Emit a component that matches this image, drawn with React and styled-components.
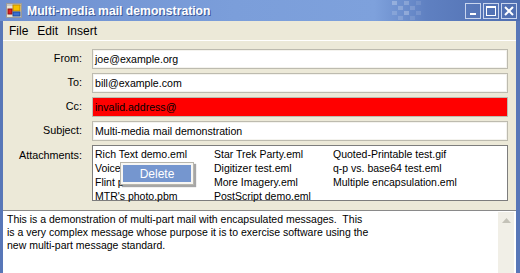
import React from 'react';
import styled, { createGlobalStyle } from 'styled-components';

const GlobalStyle = createGlobalStyle`
  html, body {
    margin: 0;
    padding: 0;
    overflow: hidden;
    background: #ffffff;
  }
`;

const Window = styled.div`
  width: 520px;
  height: 273px;
  display: flex;
  flex-direction: column;
  font-family: "Liberation Sans", Arial, sans-serif;
  overflow: hidden;
`;

const TitleBar = styled.div`
  height: 21px;
  flex: none;
  display: flex;
  align-items: center;
  padding: 0 6px 0 6px;
  position: relative;
  background: linear-gradient(to right, #6f90d0 0%, #7b9eda 45%, #7ea1dc 72%, #5f80c1 82%, #4f6eb0 100%);
`;

const Title = styled.div`
  margin-left: 5px;
  flex: 1;
  color: #ffffff;
  font-weight: bold;
  font-size: 12.2px;
  text-shadow: 1px 1px 0 #3d5a99;
`;

const Checker = styled.svg`
  position: absolute;
  left: 392px;
  top: 1px;
`;

const CaptionButtons = styled.div`
  display: flex;
  gap: 2px;
  margin-right: -3px;
`;

const CaptionButton = styled.div`
  width: 14px;
  height: 14px;
  border: 1px solid #c9d5ee;
  display: flex;
  align-items: center;
  justify-content: center;
`;

const Frame = styled.div`
  flex: 1;
  display: flex;
  flex-direction: column;
  background: #ece9d8;
  border-left: 3px solid #5877b8;
  border-right: 4px solid #5877b8;
  min-height: 0;
`;

const MenuBar = styled.div`
  height: 19px;
  flex: none;
  display: flex;
  align-items: center;
  padding-left: 3px;
  border-bottom: 1px solid #ffffff;
  font-size: 12px;
  color: #000;
`;

const MenuItem = styled.span`
  padding: 0 3px;
  margin-right: ${p => p.$gap || 0}px;
`;

const Form = styled.div`
  display: grid;
  grid-template-columns: 79px 416px;
  column-gap: 10px;
  row-gap: 4px;
  padding: 8px 0 9px 0;
  flex: none;
`;

const Label = styled.div`
  text-align: right;
  font-size: 10.8px;
  color: #000;
  align-self: ${p => (p.$top ? 'start' : 'center')};
  margin-top: ${p => (p.$top ? 4 : -2)}px;
`;

const Field = styled.div`
  height: 20px;
  box-sizing: border-box;
  border: 1px solid #bdbbaf;
  box-shadow: inset 0 0 0 1px ${p => (p.$error ? '#ff0000' : '#f4f3ee')};
  background: ${p => (p.$error ? '#ff0000' : '#ffffff')};
  padding-left: 2px;
  display: flex;
  align-items: center;
  font-size: 10.6px;
  color: #000;
`;

const ListBox = styled.div`
  position: relative;
  height: 56px;
  box-sizing: border-box;
  border: 1px solid #7d7d7d;
  background: #ffffff;
  padding: 1px 0 0 2px;
  display: grid;
  grid-template-columns: 119px 119px 119px;
  grid-template-rows: repeat(4, 14px);
  grid-auto-flow: column;
  font-size: 10.5px;
  line-height: 14px;
`;

const ListItem = styled.div`
  white-space: nowrap;
`;

const ContextMenu = styled.div`
  position: absolute;
  left: 27px;
  top: 16px;
  width: 74px;
  height: 23px;
  box-sizing: border-box;
  padding: 2px;
  background: #f7f6f3;
  border: 1px solid #b8b6ad;
  box-shadow: 2px 2px 1px rgba(0, 0, 0, 0.35);
`;

const MenuEntry = styled.div`
  height: 100%;
  background: #7596cf;
  color: #ffffff;
  font-size: 12px;
  display: flex;
  align-items: center;
  justify-content: center;
`;

const MessageArea = styled.div`
  flex: 1;
  display: flex;
  background: #ffffff;
  border-top: 1px solid #8a8a8a;
  min-height: 0;
`;

const MessageText = styled.div`
  flex: 1;
  padding: 2px 0 0 4px;
  font-size: 10.5px;
  line-height: 13px;
  color: #000;
  white-space: pre;
`;

const ScrollBar = styled.div`
  width: 17px;
  margin: 1px 2px 0 0;
  background: #f1efe7;
  border-left: 1px solid #ffffff;
  display: flex;
  justify-content: center;
  padding-top: 6px;
  box-sizing: border-box;
`;

const attachments = [
  'Rich Text demo.eml',
  'Voice',
  'Flint p',
  "MTR's photo.pbm",
  'Star Trek Party.eml',
  'Digitizer test.eml',
  'More Imagery.eml',
  'PostScript demo.eml',
  'Quoted-Printable test.gif',
  'q-p vs. base64 test.eml',
  'Multiple encapsulation.eml',
];

const message =
  'This is a demonstration of multi-part mail with encapsulated messages.  This\n' +
  'is a very complex message whose purpose it is to exercise software using the\n' +
  'new multi-part message standard.';

function AppIcon() {
  return (
    <svg width="16" height="15" viewBox="0 0 16 15">
      <rect x="0.5" y="0.5" width="15" height="14" fill="#e8e4d4" stroke="#9a9a9a" />
      <rect x="1" y="1" width="14" height="2" fill="#c5c5c5" />
      <rect x="7" y="2" width="7" height="6" fill="#f5c000" stroke="#c08a00" />
      <rect x="2" y="6" width="4" height="5" fill="#e02020" stroke="#901010" />
      <rect x="7" y="9" width="7" height="4" fill="#3a6fd0" stroke="#1f4a9a" />
    </svg>
  );
}

function CheckerPattern() {
  const cells = [
    [0, 0, 0.25], [12, 0, 0.2], [6, 5, 0.2], [18, 5, 0.15],
    [0, 10, 0.15], [12, 10, 0.25], [6, 15, 0.15], [18, 15, 0.1],
    [24, 10, 0.12], [24, 0, 0.1],
  ];
  return (
    <Checker width="32" height="20" viewBox="0 0 32 20">
      {cells.map(([x, y, o], i) => (
        <rect key={i} x={x} y={y} width="5" height="4" fill="#ffffff" opacity={o} />
      ))}
    </Checker>
  );
}

export default function App() {
  return (
    <>
      <GlobalStyle />
      <Window>
        <TitleBar>
          <AppIcon />
          <Title>Multi-media mail demonstration</Title>
          <CheckerPattern />
          <CaptionButtons>
            <CaptionButton>
              <svg width="10" height="10" viewBox="0 0 10 10">
                <rect x="2" y="7" width="6" height="2" fill="#ffffff" />
              </svg>
            </CaptionButton>
            <CaptionButton>
              <svg width="10" height="10" viewBox="0 0 10 10">
                <rect x="0.5" y="0.5" width="9" height="9" fill="none" stroke="#ffffff" />
                <rect x="0" y="0" width="10" height="2" fill="#ffffff" />
              </svg>
            </CaptionButton>
            <CaptionButton>
              <svg width="10" height="10" viewBox="0 0 10 10">
                <path d="M1 1 L9 9 M9 1 L1 9" stroke="#ffffff" strokeWidth="2" />
              </svg>
            </CaptionButton>
          </CaptionButtons>
        </TitleBar>
        <Frame>
          <MenuBar>
            <MenuItem $gap={3}>File</MenuItem>
            <MenuItem $gap={3}>Edit</MenuItem>
            <MenuItem>Insert</MenuItem>
          </MenuBar>
          <Form>
            <Label>From:</Label>
            <Field>joe@example.org</Field>
            <Label>To:</Label>
            <Field>bill@example.com</Field>
            <Label>Cc:</Label>
            <Field $error>invalid.address@</Field>
            <Label>Subject:</Label>
            <Field>Multi-media mail demonstration</Field>
            <Label $top>Attachments:</Label>
            <ListBox>
              {attachments.map(name => (
                <ListItem key={name}>{name}</ListItem>
              ))}
              <ContextMenu>
                <MenuEntry>Delete</MenuEntry>
              </ContextMenu>
            </ListBox>
          </Form>
          <MessageArea>
            <MessageText>{message}</MessageText>
            <ScrollBar>
              <svg width="9" height="5" viewBox="0 0 9 5">
                <path d="M0 5 L4.5 0 L9 5 Z" fill="#c4c2b8" />
              </svg>
            </ScrollBar>
          </MessageArea>
        </Frame>
      </Window>
    </>
  );
}
